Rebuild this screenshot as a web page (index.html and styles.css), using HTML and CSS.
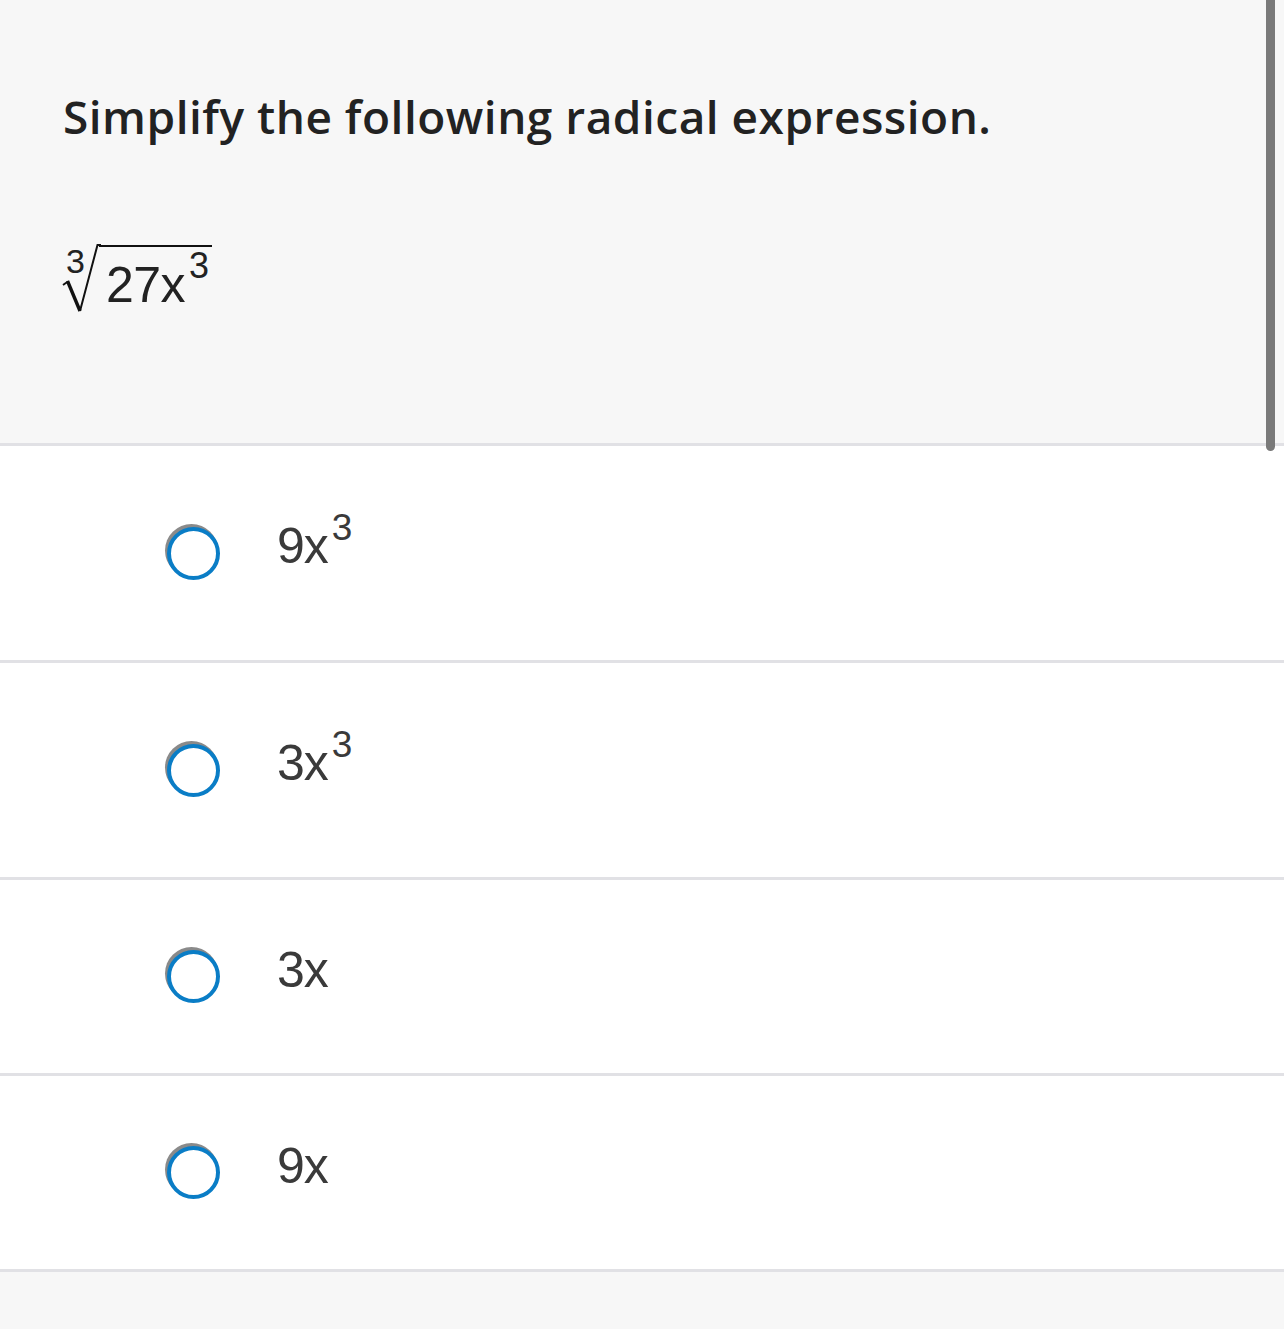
FILE: index.html
```html
<!DOCTYPE html>
<html>
<head>
<meta charset="utf-8">
<link rel="stylesheet" href="styles.css">
</head>
<body>
<div class="page">
  <section class="question">
    <h1 class="title">Simplify the following radical expression.</h1>
    <div class="math">
      <span class="index">3</span>
      <svg class="radsign" width="40" height="70" viewBox="0 0 40 70">
        <path d="M2 41 L7 37.5" fill="none" stroke="#111" stroke-width="2" stroke-linecap="butt"/>
        <path d="M6.5 37 L19 67" fill="none" stroke="#111" stroke-width="3.4"/>
        <path d="M19 67 L36.5 1 L40 1" fill="none" stroke="#111" stroke-width="2" stroke-linejoin="miter"/>
      </svg>
      <span class="radicand">27x<sup class="sup">3</sup></span>
    </div>
  </section>
  <ul class="options">
    <li class="option tall"><span class="radio"></span><span class="answer">9x<sup class="sup">3</sup></span></li>
    <li class="option tall"><span class="radio"></span><span class="answer">3x<sup class="sup">3</sup></span></li>
    <li class="option"><span class="radio"></span><span class="answer">3x</span></li>
    <li class="option"><span class="radio"></span><span class="answer">9x</span></li>
  </ul>
  <div class="footer"></div>
  <div class="scrollbar"></div>
</div>
</body>
</html>
```
FILE: styles.css
```css
html, body {
  margin: 0;
  padding: 0;
  background: #ffffff;
}
.page {
  position: relative;
  width: 1284px;
  min-height: 1329px;
  background: #f7f7f7;
}
.question {
  background: #f7f7f7;
  padding: 86px 63px 0 63px;
  box-sizing: border-box;
  border-bottom: 3px solid #e1e1e5;
  height: 446px;
}
.title {
  margin: 0;
  font-family: "Open Sans", "Liberation Sans", sans-serif;
  font-weight: 600;
  font-size: 46px;
  line-height: 60px;
  letter-spacing: 0.5px;
  color: #222222;
}
.math {
  display: flex;
  align-items: flex-start;
  margin-top: 98px;
  font-family: "Liberation Sans", Arial, sans-serif;
  color: #222;
}
.index {
  font-size: 34px;
  line-height: 34px;
  margin-left: 3px;
  margin-right: -24px;
  color: #222;
}
.radsign {
  display: block;
  flex-shrink: 0;
}
.radicand {
  border-top: 2px solid #111;
  font-size: 50px;
  line-height: 50px;
  padding: 13px 3px 0 7px;
  margin-left: -2px;
  margin-top: 1px;
  letter-spacing: -0.5px;
}
.sup {
  font-size: 36px;
  vertical-align: 24px;
  line-height: 0;
  margin-left: 4px;
  letter-spacing: 0;
}
.options {
  list-style: none;
  margin: 0;
  padding: 0;
  background: #ffffff;
}
.option {
  display: flex;
  align-items: center;
  height: 193px;
  padding-left: 167px;
  border-bottom: 3px solid #e1e1e5;
}
.option.tall {
  height: 214px;
}
.radio {
  width: 45px;
  height: 45px;
  border: 4.5px solid #0a7dc6;
  border-radius: 50%;
  background: #fff;
  box-shadow: -2px -3px 0 0 #8a8a8a;
  flex-shrink: 0;
}
.answer {
  margin-left: 57px;
  padding-bottom: 14px;
  font-family: "Liberation Sans", Arial, sans-serif;
  font-size: 50px;
  line-height: 58px;
  color: #3a3a3a;
  letter-spacing: -1px;
}
.answer .sup {
  font-size: 37px;
  vertical-align: 23px;
  margin-left: 4px;
}
.footer {
  height: 60px;
  background: #f7f7f7;
}
.scrollbar {
  position: absolute;
  top: 0;
  left: 1266px;
  width: 9px;
  height: 451px;
  background: #7a7a7a;
  border-radius: 0 0 5px 5px;
}
```
